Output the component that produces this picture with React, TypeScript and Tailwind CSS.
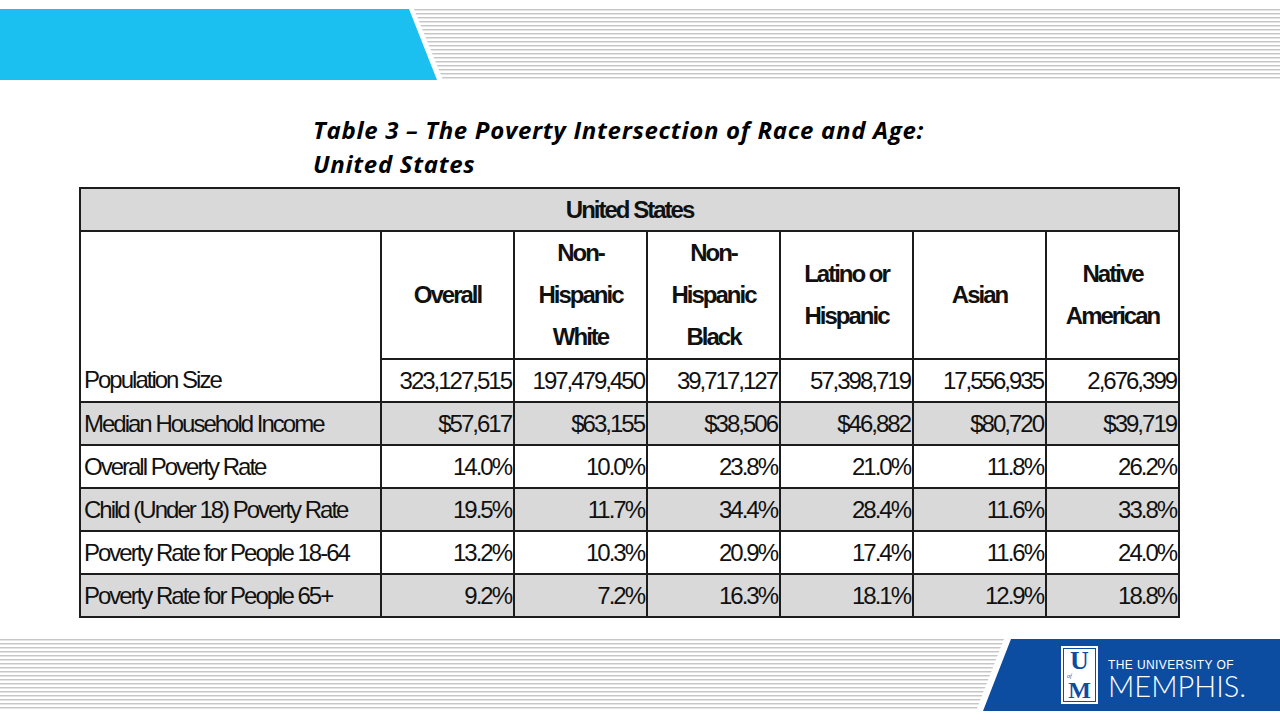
import React from 'react'

type Row = {
  label: string
  values: string[]
  shaded: boolean
}

const columns: string[][] = [
  ['Overall'],
  ['Non-', 'Hispanic', 'White'],
  ['Non-', 'Hispanic', 'Black'],
  ['Latino or', 'Hispanic'],
  ['Asian'],
  ['Native', 'American'],
]

const rows: Row[] = [
  {
    label: 'Median Household Income',
    values: ['$57,617', '$63,155', '$38,506', '$46,882', '$80,720', '$39,719'],
    shaded: true,
  },
  {
    label: 'Overall Poverty Rate',
    values: ['14.0%', '10.0%', '23.8%', '21.0%', '11.8%', '26.2%'],
    shaded: false,
  },
  {
    label: 'Child (Under 18) Poverty Rate',
    values: ['19.5%', '11.7%', '34.4%', '28.4%', '11.6%', '33.8%'],
    shaded: true,
  },
  {
    label: 'Poverty Rate for People 18-64',
    values: ['13.2%', '10.3%', '20.9%', '17.4%', '11.6%', '24.0%'],
    shaded: false,
  },
  {
    label: 'Poverty Rate for People 65+',
    values: ['9.2%', '7.2%', '16.3%', '18.1%', '12.9%', '18.8%'],
    shaded: true,
  },
]

const population = ['323,127,515', '197,479,450', '39,717,127', '57,398,719', '17,556,935', '2,676,399']

const stripes =
  'bg-[repeating-linear-gradient(180deg,#c6c6c6_0px,#c6c6c6_1px,#e4e4e4_1px,#e4e4e4_2px,#ffffff_2px,#ffffff_4px)]'

const cell = 'border-2 border-[#1c1c1c] p-0'
const narrow = "font-['Liberation_Sans_Narrow','Arial_Narrow','Liberation_Sans',sans-serif] tracking-[-2px]"

function TopBar() {
  return (
    <div className={`relative h-[71px] ${stripes}`}>
      <div className="absolute inset-y-0 left-0 w-[450px] bg-white [clip-path:polygon(0_0,414px_0,443px_100%,0_100%)]" />
      <div className="absolute inset-y-0 left-0 w-[440px] bg-[#1bc0f0] [clip-path:polygon(0_0,409px_0,437px_100%,0_100%)]" />
    </div>
  )
}

function MemphisLogo() {
  return (
    <div className="flex items-center gap-[10px]">
      <div className="flex h-[58px] w-[37px] flex-col items-center justify-between bg-white px-[3px] py-[4px] outline outline-1 outline-[#0c4da2] -outline-offset-[3px]">
        <span className="font-['Liberation_Serif',serif] text-[26px] font-bold leading-[22px] text-[#0c4da2]">U</span>
        <span className="self-start pl-[3px] font-['Liberation_Serif',serif] text-[6px] italic leading-[6px] text-[#0c4da2]">of</span>
        <span className="font-['Liberation_Serif',serif] text-[24px] font-bold leading-[20px] text-[#0c4da2]">M</span>
      </div>
      <div className="mt-[8px] flex flex-col gap-[1px] text-white">
        <span className="font-['Liberation_Sans',sans-serif] text-[12px] leading-[12px] tracking-[0.4px]">THE UNIVERSITY OF</span>
        <span className="font-['Lato',sans-serif] text-[29px] font-light leading-[28px]">MEMPHIS.</span>
      </div>
    </div>
  )
}

function BottomBar() {
  return (
    <div className={`relative h-[72px] ${stripes}`}>
      <div className="absolute inset-y-0 right-0 w-[304px] bg-white [clip-path:polygon(28px_0,100%_0,100%_100%,0_100%)]" />
      <div className="absolute inset-y-0 right-0 flex w-[297px] items-center bg-[#0c4da2] pl-[78px] [clip-path:polygon(28px_0,100%_0,100%_100%,0_100%)]">
        <MemphisLogo />
      </div>
    </div>
  )
}

export default function App() {
  return (
    <div className="flex h-[720px] w-[1280px] flex-col overflow-hidden bg-white pt-[9px]">
      <TopBar />

      <div className="ml-[313px] mt-[33px] font-['Open_Sans',sans-serif] text-[24px] font-bold italic leading-[34px] tracking-[0.7px] text-black">
        <p>Table 3 – The Poverty Intersection of Race and Age:</p>
        <p>United States</p>
      </div>

      <table className={`ml-[79px] mt-[6px] w-[1099px] table-fixed border-collapse text-[24px] text-[#111] ${narrow}`}>
        <colgroup>
          <col className="w-[301px]" />
          {columns.map((_, i) => (
            <col key={i} className="w-[133px]" />
          ))}
        </colgroup>
        <tbody>
          <tr className="h-[43px] bg-[#d9d9d9]">
            <td colSpan={7} className={`${cell} text-center font-bold`}>
              United States
            </td>
          </tr>
          <tr className="h-[127px] bg-white">
            <td rowSpan={2} className={`${cell} pl-[3px] align-bottom leading-[42px]`}>
              Population Size
            </td>
            {columns.map((lines, i) => (
              <td key={i} className={`${cell} text-center align-middle font-bold leading-[42px]`}>
                {lines.map((l) => (
                  <div key={l}>{l}</div>
                ))}
              </td>
            ))}
          </tr>
          <tr className="h-[43px] bg-white">
            {population.map((v) => (
              <td key={v} className={`${cell} pr-[2px] text-right`}>
                {v}
              </td>
            ))}
          </tr>
          {rows.map((r) => (
            <tr key={r.label} className={`h-[43px] ${r.shaded ? 'bg-[#d9d9d9]' : 'bg-white'}`}>
              <td className={`${cell} pl-[3px]`}>{r.label}</td>
              {r.values.map((v, i) => (
                <td key={i} className={`${cell} pr-[2px] text-right`}>
                  {v}
                </td>
              ))}
            </tr>
          ))}
        </tbody>
      </table>

      <div className="mt-[21px]">
        <BottomBar />
      </div>
    </div>
  )
}
